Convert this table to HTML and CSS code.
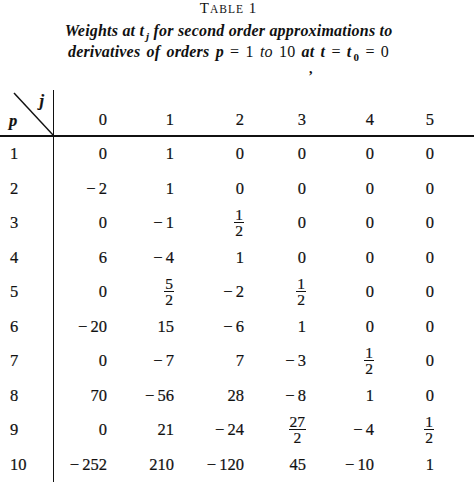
FILE: index.html
```html
<!DOCTYPE html>
<html>
<head>
<meta charset="utf-8">
<link rel="stylesheet" href="styles.css">
</head>
<body>
<div class="page">
  <div class="caption">
    <div class="title">T<span class="sc">ABLE</span> 1</div>
    <div class="sub">Weights at t<span class="idx">j</span> for second order approximations to</div>
    <div class="sub wide">derivatives of orders p <span class="up">= 1</span> <span class="thin">to</span> <span class="up">10</span> at t <span class="up">=</span> t<span class="idx0">0</span> <span class="up">= 0</span></div>
    <div class="mark">,</div>
  </div>
  <div class="tbl">
    <div class="corner">
      <svg class="diag" width="54" height="47" viewBox="0 0 54 47"><line x1="14" y1="3" x2="54" y2="46" stroke="#111" stroke-width="1.5"/></svg>
      <span class="j">j</span>
      <span class="p">p</span>
    </div>
    <div class="h">0</div><div class="h">1</div><div class="h">2</div><div class="h">3</div><div class="h">4</div><div class="h">5</div><div class="h fill"></div>

    <div class="lab">1</div><div class="c">0</div><div class="c">1</div><div class="c">0</div><div class="c">0</div><div class="c">0</div><div class="c">0</div><div class="c"></div>
    <div class="lab">2</div><div class="c">−&thinsp;2</div><div class="c">1</div><div class="c">0</div><div class="c">0</div><div class="c">0</div><div class="c">0</div><div class="c"></div>
    <div class="lab">3</div><div class="c">0</div><div class="c">−&thinsp;1</div><div class="c"><span class="frac"><span class="num">1</span><span class="den">2</span></span></div><div class="c">0</div><div class="c">0</div><div class="c">0</div><div class="c"></div>
    <div class="lab">4</div><div class="c">6</div><div class="c">−&thinsp;4</div><div class="c">1</div><div class="c">0</div><div class="c">0</div><div class="c">0</div><div class="c"></div>
    <div class="lab">5</div><div class="c">0</div><div class="c"><span class="frac"><span class="num">5</span><span class="den">2</span></span></div><div class="c">−&thinsp;2</div><div class="c"><span class="frac"><span class="num">1</span><span class="den">2</span></span></div><div class="c">0</div><div class="c">0</div><div class="c"></div>
    <div class="lab">6</div><div class="c">−&thinsp;20</div><div class="c">15</div><div class="c">−&thinsp;6</div><div class="c">1</div><div class="c">0</div><div class="c">0</div><div class="c"></div>
    <div class="lab">7</div><div class="c">0</div><div class="c">−&thinsp;7</div><div class="c">7</div><div class="c">−&thinsp;3</div><div class="c"><span class="frac"><span class="num">1</span><span class="den">2</span></span></div><div class="c">0</div><div class="c"></div>
    <div class="lab">8</div><div class="c">70</div><div class="c">−&thinsp;56</div><div class="c">28</div><div class="c">−&thinsp;8</div><div class="c">1</div><div class="c">0</div><div class="c"></div>
    <div class="lab">9</div><div class="c">0</div><div class="c">21</div><div class="c">−&thinsp;24</div><div class="c"><span class="frac"><span class="num">27</span><span class="den">2</span></span></div><div class="c">−&thinsp;4</div><div class="c"><span class="frac"><span class="num">1</span><span class="den">2</span></span></div><div class="c"></div>
    <div class="lab">10</div><div class="c">−&thinsp;252</div><div class="c">210</div><div class="c">−&thinsp;120</div><div class="c">45</div><div class="c">−&thinsp;10</div><div class="c">1</div><div class="c"></div>
  </div>
</div>
</body>
</html>
```

FILE: styles.css
```css
html, body {
  margin: 0;
  padding: 0;
  background: #ffffff;
}
body {
  font-family: "Liberation Serif", "Times New Roman", serif;
  color: #111111;
  width: 474px;
  height: 483px;
  overflow: hidden;
}
.page {
  width: 474px;
}
.caption {
  height: 90px;
  padding-right: 17px;
  text-align: center;
}
.title {
  font-size: 15px;
  line-height: 16px;
  letter-spacing: 1px;
  margin-bottom: 4px;
}
.title .sc {
  font-size: 11.5px;
}
.sub {
  font-size: 16px;
  line-height: 19px;
  font-weight: bold;
  font-style: italic;
  letter-spacing: 0.2px;
}
.sub.wide {
  word-spacing: 2px;
}
.sub .up {
  font-style: normal;
  font-weight: normal;
}
.sub .thin {
  font-weight: normal;
}
.sub .idx {
  font-size: 11px;
  position: relative;
  top: 4px;
  margin-left: 2px;
}
.sub .idx0 {
  font-size: 11px;
  font-style: normal;
  position: relative;
  top: 4px;
  margin-left: 2px;
}
.mark {
  font-size: 14px;
  font-weight: bold;
  line-height: 12px;
  text-align: left;
  padding-left: 309px;
}
.tbl {
  display: grid;
  grid-template-columns: 54px 53px 67px 70px 62px 68px 60px 1fr;
  grid-template-rows: 47px repeat(10, 34.5px);
  font-size: 16.5px;
  line-height: 20px;
  -webkit-text-stroke: 0.2px #111;
}
.corner {
  position: relative;
  border-right: 1.5px solid #111;
  border-bottom: 2px solid #111;
  display: flex;
  flex-direction: column;
  padding: 3px 0 5px 9px;
  font-weight: bold;
  font-style: italic;
}
.diag {
  position: absolute;
  left: 0;
  top: 0;
}
.corner .j {
  align-self: flex-end;
  margin-right: 9px;
  line-height: 16px;
}
.corner .p {
  margin-top: auto;
  line-height: 18px;
}
.h {
  border-bottom: 2px solid #111;
  display: flex;
  align-items: flex-end;
  justify-content: flex-end;
  padding-bottom: 5px;
}
.lab {
  border-right: 1.5px solid #111;
  display: flex;
  align-items: center;
  padding-left: 10px;
}
.c {
  display: flex;
  align-items: center;
  justify-content: flex-end;
}
.frac {
  display: inline-flex;
  flex-direction: column;
  align-items: center;
  font-size: 15.5px;
  line-height: 12px;
}
.frac .num {
  border-bottom: 1px solid #111;
  padding: 0 1px 1px;
  align-self: stretch;
  text-align: center;
}
.frac .den {
  padding-top: 2px;
}
```
